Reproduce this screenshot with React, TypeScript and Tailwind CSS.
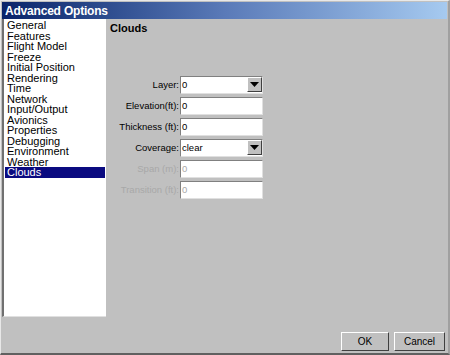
import React from "react";

const items = [
  "General",
  "Features",
  "Flight Model",
  "Freeze",
  "Initial Position",
  "Rendering",
  "Time",
  "Network",
  "Input/Output",
  "Avionics",
  "Properties",
  "Debugging",
  "Environment",
  "Weather",
  "Clouds",
];

function Arrow() {
  return (
    <div className="w-[15px] h-[15px] bg-[#c0c0c0] border-t border-l border-t-white border-l-white border-b border-r border-b-[#404040] border-r-[#404040] flex items-center justify-center">
      <svg width="9" height="6" viewBox="0 0 9 6">
        <path d="M0 0 H9 L4.5 5 Z" fill="#000" />
      </svg>
    </div>
  );
}

function Row({
  label,
  value,
  combo,
  disabled,
}: {
  label: string;
  value: string;
  combo?: boolean;
  disabled?: boolean;
}) {
  return (
    <div className="flex items-center h-[17px] text-[9.5px]">
      <div
        className={`w-[66px] text-right pr-[1px] whitespace-nowrap ${disabled ? "text-[#a8a8a8]" : "text-black"}`}
      >
        {label}
      </div>
      <div className="w-[83px] h-[18px] bg-white border-t border-l border-t-[#808080] border-l-[#808080] border-b border-r border-b-[#e0e0e0] border-r-[#e0e0e0] flex items-center">
        <span className={`pl-[1px] flex-1 ${disabled ? "text-[#a8a8a8]" : "text-black"}`}>{value}</span>
        {combo && <Arrow />}
      </div>
    </div>
  );
}

export default function App() {
  return (
    <div
      className="w-[450px] h-[355px] bg-[#c0c0c0] flex flex-col border-t border-l border-t-[#e8e8e8] border-l-[#e8e8e8] border-b-2 border-r-2 border-b-[#606060] border-r-[#a0a0a0] px-[1px] pt-[1px] text-[10px] leading-none"
      style={{ fontFamily: '"Liberation Sans", Arial, sans-serif' }}
    >
      <div className="h-[17px] bg-gradient-to-r from-[#0a246a] via-[#5a7ab8] to-[#a6caf0] text-white text-[12px] font-bold flex items-center pl-[3px] tracking-[-0.2px]">
        Advanced Options
      </div>
      <div className="flex h-[298px]">
        <div className="w-[104px] bg-white border-l-2 border-l-[#707070] border-b border-b-[#e0e0e0] pl-[1px] pt-[1px] text-[11px]">
          {items.map((it) => (
            <div
              key={it}
              className={`h-[10.5px] leading-[10.5px] pl-[2px] whitespace-nowrap ${
                it === "Clouds" ? "bg-[#0a0a80] text-white w-[100px]" : "text-black"
              }`}
            >
              {it}
            </div>
          ))}
        </div>
        <div className="flex-1 pl-[4px] pt-[4px]">
          <div className="font-bold text-[11px] text-black">Clouds</div>
          <div className="mt-[42px] ml-[4px] flex flex-col gap-[4px]">
            <Row label="Layer:" value="0" combo />
            <Row label="Elevation(ft):" value="0" />
            <Row label="Thickness (ft):" value="0" />
            <Row label="Coverage:" value="clear" combo />
            <Row label="Span (m):" value="0" disabled />
            <Row label="Transition (ft):" value="0" disabled />
          </div>
        </div>
      </div>
      <div className="flex-1 flex justify-end items-start pt-[15px] pr-[2px] gap-[5px]">
        <button className="w-[48px] h-[19px] bg-[#c0c0c0] border border-t-white border-l-white border-b-[#404040] border-r-[#404040] text-[10px] text-black">
          OK
        </button>
        <button className="w-[51px] h-[19px] bg-[#c0c0c0] border border-t-white border-l-white border-b-[#404040] border-r-[#404040] text-[10px] text-black">
          Cancel
        </button>
      </div>
    </div>
  );
}
